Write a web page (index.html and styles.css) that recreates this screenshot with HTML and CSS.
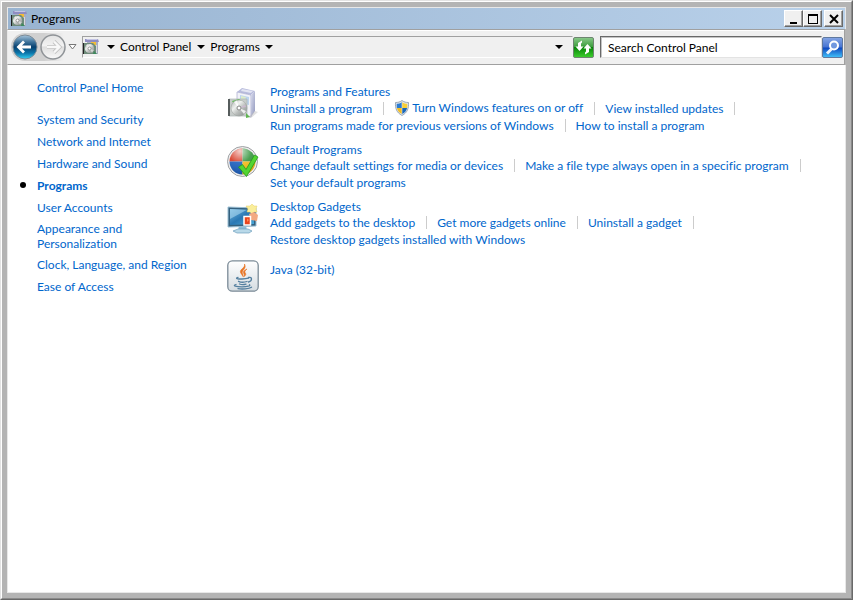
FILE: index.html
```html
<!DOCTYPE html>
<html lang="en">
<head>
<meta charset="UTF-8">
<meta name="viewport" content="width=device-width, initial-scale=1.0">
<title>Programs</title>
<link rel="stylesheet" href="styles.css">
</head>
<body>
  <svg class="defs" width="0" height="0" aria-hidden="true">
    <defs>
      <linearGradient id="box-side" x1="0" y1="0" x2="1" y2="1">
        <stop offset="0" stop-color="#d9dcee"/><stop offset="1" stop-color="#9298bd"/>
      </linearGradient>
      <linearGradient id="disc" x1="0" y1="0" x2="1" y2="1">
        <stop offset="0" stop-color="#a9adab"/><stop offset=".35" stop-color="#eef0ee"/>
        <stop offset=".6" stop-color="#b9bdbb"/><stop offset="1" stop-color="#858a88"/>
      </linearGradient>
      <symbol id="programs-small" viewBox="0 0 16 16">
        <path d="M2 0h13l1 3H2z" fill="#8f8dc0"/>
        <path d="M4 0h10l1 1H3z" fill="#c4c4e4"/>
        <path d="M4 3h11v12H4z" fill="#a9abc0"/>
        <path d="M8 3h5v5H8z" fill="#f4bd35"/>
        <path d="M12 6h2v8h-2z" fill="#d5d8de"/>
        <path d="M1 4h9l3 3v8H1z" fill="#6f8b7a"/>
        <path d="M0 4h1v11H0z" fill="#222"/>
        <circle cx="6.500" cy="9.500" r="4.600" fill="url(#disc)"/>
        <path d="M6 9L3 6l2-1zM7 10l4 1-2 3z" fill="#fff" opacity=".5"/>
        <circle cx="6.500" cy="9.500" r="1.500" fill="#fff" stroke="#777" stroke-width=".7"/>
        <path d="M11 12l3 3h-4z" fill="#3d8a5c"/>
      </symbol>
    </defs>
  </svg>

  <div class="window">
    <header class="title-bar">
      <svg class="icon16" aria-hidden="true"><use href="#programs-small"/></svg>
      <h1>Programs</h1>
      <div class="window-buttons">
        <button type="button" aria-label="Minimize">
          <svg width="14" height="12" viewBox="0 0 14 12"><path d="M3 9h7v2H3z"/></svg>
        </button>
        <button type="button" aria-label="Maximize">
          <svg width="14" height="12" viewBox="0 0 14 12"><path d="M2 1h10v10H2zM3 3v7h8V3z" fill-rule="evenodd"/></svg>
        </button>
        <button type="button" class="close" aria-label="Close">
          <svg width="14" height="12" viewBox="0 0 14 12"><path d="M3 2l8 8M11 2l-8 8" stroke="#000" stroke-width="2"/></svg>
        </button>
      </div>
    </header>

    <div class="toolbar">
      <div class="history">
        <button type="button" class="round" aria-label="Back">
          <svg width="28" height="28" viewBox="0 0 28 28">
            <defs>
              <linearGradient id="back" x1="0" y1="0" x2="0" y2="1">
                <stop offset="0" stop-color="#a9c6dc"/><stop offset=".3" stop-color="#3c7199"/>
                <stop offset=".5" stop-color="#074170"/><stop offset=".75" stop-color="#0b75aa"/>
                <stop offset="1" stop-color="#34d2f5"/>
              </linearGradient>
            </defs>
            <circle cx="14" cy="14" r="12" fill="url(#back)" stroke="#7d8b96" stroke-width="1"/>
            <path d="M8 14h12M13 8.500L7.500 14l5.500 5.500" fill="none" stroke="#fff" stroke-width="2.800"/>
          </svg>
        </button>
        <button type="button" class="round" aria-label="Forward">
          <svg width="28" height="28" viewBox="0 0 28 28">
            <defs>
              <linearGradient id="forward" x1="0" y1="0" x2="0" y2="1">
                <stop offset="0" stop-color="#e3e3e3"/><stop offset=".45" stop-color="#f2f2f2"/>
                <stop offset=".5" stop-color="#dedede"/><stop offset="1" stop-color="#fafafa"/>
              </linearGradient>
            </defs>
            <circle cx="14" cy="14" r="12" fill="url(#forward)" stroke="#8f9397" stroke-width="1.500"/>
            <path d="M8 14h12M15 8.500l5.500 5.500-5.500 5.500" fill="none" stroke="#c2c2c2" stroke-width="4"/>
            <path d="M8 14h12M15 8.500l5.500 5.500-5.500 5.500" fill="none" stroke="#f8f8f8" stroke-width="2.400"/>
          </svg>
        </button>
        <button type="button" class="recent" aria-label="Recent pages">
          <svg width="9" height="6" viewBox="0 0 9 6"><path d="M1 .5h7L4.500 5z" fill="#fff" stroke="#777"/></svg>
        </button>
      </div>

      <nav class="address" aria-label="Address">
        <svg class="icon16" aria-hidden="true"><use href="#programs-small"/></svg>
        <button type="button" class="arrow" aria-label="Locations"></button>
        <a href="#">Control Panel</a>
        <button type="button" class="arrow" aria-label="Control Panel items"></button>
        <a href="#">Programs</a>
        <button type="button" class="arrow" aria-label="Programs items"></button>
        <button type="button" class="arrow previous" aria-label="Previous locations"></button>
      </nav>
      <button type="button" class="tool" aria-label="Refresh">
        <svg width="21" height="21" viewBox="0 0 21 21">
          <defs>
            <linearGradient id="green" x1="0" y1="0" x2="0" y2="1">
              <stop offset="0" stop-color="#8bc98b"/><stop offset=".45" stop-color="#3f9f3f"/>
              <stop offset=".5" stop-color="#078507"/><stop offset="1" stop-color="#3ed02e"/>
            </linearGradient>
          </defs>
          <rect x=".5" y=".5" width="20" height="20" rx="1.500" fill="url(#green)" stroke="#6e8570"/>
          <path d="M9 3.500v2L8 6.500v3h2.500L6.500 14l-4-4.500H5V6zM14.500 7l4 4.500H16V15l-4 2.500v-2l1-1v-3h-2.500z" fill="#fff"/>
        </svg>
      </button>

      <form class="search">
        <input type="search" aria-label="Search Control Panel" placeholder="Search Control Panel">
        <button type="button" class="tool" aria-label="Search">
          <svg width="21" height="21" viewBox="0 0 21 21">
            <defs>
              <linearGradient id="blue" x1="0" y1="0" x2="0" y2="1">
                <stop offset="0" stop-color="#86a6e4"/><stop offset=".48" stop-color="#4573d2"/>
                <stop offset=".52" stop-color="#0e46be"/><stop offset="1" stop-color="#42c3fa"/>
              </linearGradient>
            </defs>
            <rect x=".5" y=".5" width="20" height="20" rx="1.500" fill="url(#blue)" stroke="#60799f"/>
            <path d="M9.500 12L5 16.500" stroke="#eef3fb" stroke-width="3"/>
            <circle cx="12" cy="8.500" r="4" fill="#7198df" stroke="#fff" stroke-width="2"/>
          </svg>
        </button>
      </form>
    </div>

    <div class="content">
      <nav class="sidebar" aria-label="Control Panel">
        <a class="home" href="#">Control Panel Home</a>
        <ul>
          <li><a href="#">System and Security</a></li>
          <li><a href="#">Network and Internet</a></li>
          <li><a href="#">Hardware and Sound</a></li>
          <li class="current"><a href="#" aria-current="page">Programs</a></li>
          <li><a href="#">User Accounts</a></li>
          <li><a href="#">Appearance and<br>Personalization</a></li>
          <li><a href="#">Clock, Language, and Region</a></li>
          <li><a href="#">Ease of Access</a></li>
        </ul>
      </nav>

      <main>
        <section class="category">
          <svg class="icon32" viewBox="0 0 32 32" aria-hidden="true">
            <path d="M10 4l5-4 13 3-4 4z" fill="#b7bbdc"/>
            <path d="M15 1l11 2-2 2-10-2z" fill="#e2e4f2"/>
            <path d="M10 4l14 3v22l-14-3z" fill="#f1f2f8" stroke="#a7abcd" stroke-width=".7"/>
            <path d="M24 7l4-4v20l-4 6z" fill="url(#box-side)"/>
            <path d="M28 23l3 1-7 6-3-1z" fill="#bbb" opacity=".45"/>
            <path d="M13 7l9 2v8l-9-2z" fill="#bbd3ed"/>
            <path d="M14 8l5 1-2 5-3-1z" fill="#dcebc8"/>
            <path d="M2 11h18v17H2z" fill="#c7ccca" stroke="#adb4b4" stroke-width=".7"/>
            <path d="M1 11h2v17H1z" fill="#565c5c"/>
            <path d="M5 13l7-2 5 4-8 5z" fill="#67bd5b"/>
            <circle cx="12" cy="20" r="8" fill="url(#disc)" stroke="#999e9b" stroke-width=".5"/>
            <path d="M12 20l-5-6 3-1.500zM12 20l5 6 2-3z" fill="#fff" opacity=".8"/>
            <path d="M12 20l6-3 1 2z" fill="#d6b8da" opacity=".7"/>
            <circle cx="12" cy="20" r="2" fill="#fff" stroke="#888"/>
            <path d="M19 25l4 4-4 1z" fill="#61b551"/>
          </svg>
          <div class="tasks">
            <h2><a href="#">Programs and Features</a></h2>
            <ul>
              <li><a href="#">Uninstall a program</a></li>
              <li>
                <a class="shielded" href="#">
                  <svg class="icon16" viewBox="0 0 16 16" aria-hidden="true">
                    <path d="M8 .5C10 2 12 2.500 14.500 2.500c.3 6-1 10-6.500 13C2.500 12.500 1.200 8.500 1.500 2.500 4 2.500 6 2 8 .5z" fill="#dfe5ec" stroke="#8795a5" stroke-width=".8"/>
                    <path d="M7.700 2.200V8H2.900c-.2-1.500-.2-2.700-.2-4.300 2 0 3.500-.5 5-1.500z" fill="#2c7cd1"/>
                    <path d="M8.300 2.200V8h4.800c.2-1.500.2-2.700.2-4.300-2 0-3.500-.5-5-1.500z" fill="#f9cf36"/>
                    <path d="M2.900 8h4.800v6C5 12.500 3.500 10.500 2.900 8z" fill="#f3bd21"/>
                    <path d="M13.100 8H8.300v6c2.700-1.500 4.200-3.500 4.800-6z" fill="#1967b9"/>
                  </svg>
                  Turn Windows features on or off
                </a>
              </li>
              <li><a href="#">View installed updates</a></li>
              <li><a href="#">Run programs made for previous versions of Windows</a></li>
              <li><a href="#">How to install a program</a></li>
            </ul>
          </div>
        </section>

        <section class="category">
          <svg class="icon32" viewBox="0 0 32 32" aria-hidden="true">
            <defs>
              <radialGradient id="shine" cx=".4" cy=".1" r=".9">
                <stop offset="0" stop-color="#fff" stop-opacity=".75"/><stop offset=".5" stop-color="#fff" stop-opacity=".1"/>
                <stop offset="1" stop-color="#000" stop-opacity=".15"/>
              </radialGradient>
            </defs>
            <circle cx="15.500" cy="15.500" r="15" fill="#ececec" stroke="#8a8d90" stroke-width=".8"/>
            <path d="M15.500 15.500V2.500a13 13 0 0 0-13 13z" fill="#d63a25"/>
            <path d="M15.500 15.500V2.500a13 13 0 0 1 13 13z" fill="#389640"/>
            <path d="M15.500 15.500h-13a13 13 0 0 0 13 13z" fill="#1d60bf"/>
            <path d="M15.500 15.500h13a13 13 0 0 1-13 13z" fill="#f6bd19"/>
            <circle cx="15.500" cy="15.500" r="13" fill="url(#shine)"/>
            <path d="M11.500 21l4-2.500 3.500 5L27.500 9l3.500 2-11.500 19.500z" fill="#52d532" stroke="#249a1c" stroke-width=".8"/>
          </svg>
          <div class="tasks">
            <h2><a href="#">Default Programs</a></h2>
            <ul>
              <li><a href="#">Change default settings for media or devices</a></li>
              <li><a href="#">Make a file type always open in a specific program</a></li>
              <li><a href="#">Set your default programs</a></li>
            </ul>
          </div>
        </section>

        <section class="category">
          <svg class="icon32" viewBox="0 0 32 32" aria-hidden="true">
            <defs>
              <linearGradient id="screen" x1="0" y1="0" x2="1" y2="1">
                <stop offset="0" stop-color="#6fb3dc"/><stop offset=".5" stop-color="#2a78b4"/><stop offset="1" stop-color="#49a9da"/>
              </linearGradient>
            </defs>
            <path d="M12 22h7l1 6h-9z" fill="#8bbbd6"/>
            <path d="M6 28l5-2h10l4 2-3 2H10z" fill="#b9d9e9" stroke="#6e9fbd" stroke-width=".7"/>
            <path d="M1 4l28 1v18L1 24z" fill="#34617f" stroke="#9bbfd4" stroke-width="1"/>
            <path d="M3 6l24 1v14L3 22z" fill="url(#screen)"/>
            <path d="M3 6l17 .7L3 16z" fill="#b5def4" opacity=".55"/>
            <path d="M25 1l2 2 3 0-1 3 1 3-3 0-2 2-2-2-3 0 1-3-2-3 4 0z" fill="#faee9a" stroke="#e6cf6a" stroke-width=".5"/>
            <path d="M22 11l5-2 4 3-1 6-6-1z" fill="#f3a982"/>
            <path d="M17 13.500h6.500v8.500H17z" fill="#e8451e" stroke="#fff" stroke-width="1.500"/>
            <path d="M20 15.500l2 1.500-2 2z" fill="#ff8a50"/>
          </svg>
          <div class="tasks">
            <h2><a href="#">Desktop Gadgets</a></h2>
            <ul>
              <li><a href="#">Add gadgets to the desktop</a></li>
              <li><a href="#">Get more gadgets online</a></li>
              <li><a href="#">Uninstall a gadget</a></li>
              <li><a href="#">Restore desktop gadgets installed with Windows</a></li>
            </ul>
          </div>
        </section>

        <section class="category single">
          <svg class="icon32" viewBox="0 0 32 32" aria-hidden="true">
            <defs>
              <linearGradient id="tile" x1="0" y1="0" x2="0" y2="1">
                <stop offset="0" stop-color="#fff"/><stop offset="1" stop-color="#d5dce1"/>
              </linearGradient>
            </defs>
            <rect x=".8" y=".8" width="30.400" height="30.400" rx="4.500" fill="url(#tile)" stroke="#7b8b97" stroke-width="1.300"/>
            <path d="M17.500 4c1 4-5 5-4 8.500.4 1.500 2 2.500 2.500 4 .5-2.500-1.500-3-.5-5 .8-2 4-3.500 2-7.500zM20 9c-3.500 1.500-4.500 3-3 5 .6 1 .2 2-.5 2.800 3-1.500 2.500-3 1.500-4.300-.6-1 .5-2.200 2-3.500z" fill="#e87424" stroke="#e87424" stroke-width=".6"/>
            <g fill="none" stroke="#547f9f" stroke-width="1.300" stroke-linecap="round">
              <path d="M11 17.300c-3 1-1 1.700 4 1.700 3 0 5-.3 6.500-.8"/>
              <path d="M11.500 21.300c2 1 6 1 8.500.2"/>
              <path d="M12.500 24c2 .8 4.500.7 6.500.1"/>
              <path d="M21.500 17.500c4-1 4 3.500 0 4.500"/>
              <path d="M9 24.500c-4 1.300 0 2.300 6 2.300 5 0 9-.8 7.500-2.100"/>
              <path d="M11 28.700c4 .6 11 .3 13.500-1.500"/>
            </g>
          </svg>
          <div class="tasks">
            <h2><a href="#">Java (32-bit)</a></h2>
          </div>
        </section>
      </main>
    </div>
  </div>
</body>
</html>
```

FILE: styles.css
```css
* {
  box-sizing: border-box;
}
body {
  margin: 0;
  min-height: 100vh;
  display: flex;
  font-family: Lato, "Open Sans", sans-serif;
  font-size: 12px;
  font-variant-ligatures: none;
  line-height: 16px;
  color: #000;
  background: #b4b4b4;
  border: 1px solid;
  border-color: #e3e3e3 #696969 #696969 #e3e3e3;
}
.defs {
  position: absolute;
}
svg {
  display: block;
  flex: none;
}
h1, h2, ul {
  margin: 0;
  padding: 0;
  font-size: 12px;
  font-weight: normal;
  list-style: none;
}
button {
  padding: 0;
  border: none;
  background: none;
  flex: none;
}
a {
  color: #0066cc;
  text-decoration: none;
}
a:hover {
  text-decoration: underline;
}
.icon16 {
  width: 16px;
  height: 16px;
}
.icon32 {
  width: 32px;
  height: 32px;
}
.window {
  flex: 1;
  display: flex;
  flex-direction: column;
  border: 1px solid;
  border-color: #fff #8a8a8a #8a8a8a #fff;
  padding: 5px;
}

/* title bar */
.title-bar {
  display: flex;
  align-items: center;
  gap: 4px;
  height: 22px;
  padding: 0 2px 0 3px;
  border: 1px solid #e8e8e8;
  border-bottom: none;
  background: linear-gradient(to right, #99b4d1, #b9d1ea);
}
.title-bar h1 {
  flex: 1;
}
.window-buttons {
  display: flex;
}
.window-buttons button {
  width: 19px;
  height: 17px;
  display: flex;
  align-items: center;
  justify-content: center;
  background: #f0f0f0;
  border: 1px solid;
  border-color: #fff #696969 #696969 #fff;
  box-shadow: inset -1px -1px #a0a0a0;
}
.window-buttons .close {
  margin-left: 2px;
}

/* toolbar */
.toolbar {
  display: flex;
  align-items: center;
  height: 36px;
  margin-right: 1px;
  padding: 0 1px 0 3px;
  background: #f0f0f0;
  border: 1px solid #a0a0a0;
  border-left-color: #e8e8e8;
  box-shadow: inset 0 1px #fff;
}
.history {
  display: flex;
  align-items: center;
  margin-right: 5px;
  border-radius: 14px;
  background: linear-gradient(to right, #d0d0d0 50%, #f0f0f0 80%);
}
.round {
  border-radius: 50%;
}
.recent {
  margin-left: 1px;
}
.address {
  flex: 1;
  display: flex;
  align-items: center;
  height: 22px;
  border: 1px solid;
  border-color: #a0a0a0 #f0f0f0 #fff #a0a0a0;
}
.address a {
  color: #000;
}
.arrow {
  width: 19px;
  height: 18px;
  display: flex;
  align-items: center;
  justify-content: center;
}
.arrow::before {
  content: "";
  border: 4px solid transparent;
  border-top-color: #000;
  border-bottom: none;
}
.icon16 + .arrow {
  margin-left: 2px;
}
.address .previous {
  margin-left: auto;
  margin-right: 4px;
}
.search {
  display: flex;
  align-items: center;
  margin-left: 6px;
}
.search input {
  width: 222px;
  height: 22px;
  padding: 0 7px;
  font: inherit;
  color: #000;
  background: #fff;
  border: 1px solid;
  border-color: #696969 #e3e3e3 #e3e3e3 #696969;
  box-shadow: inset 1px 1px #c4c4c4;
  border-radius: 0;
  appearance: none;
}
.search input::placeholder {
  color: #000;
  opacity: 1;
}

/* page */
.content {
  flex: 1;
  display: grid;
  grid-template-columns: 189px 1fr;
  column-gap: 30px;
  background: #fff;
  border: 1px solid #e8e8e8;
  border-top: none;
}
.sidebar {
  padding: 15px 0 0 29px;
}
.home {
  display: block;
  margin-bottom: 15px;
}
.sidebar ul {
  display: flex;
  flex-direction: column;
  gap: 5px;
}
.sidebar li {
  display: flex;
  align-items: center;
  min-height: 17px;
  line-height: 15px;
  white-space: nowrap;
}
.current {
  position: relative;
  font-weight: bold;
}
.current::before {
  content: "";
  position: absolute;
  left: -17px;
  top: 5px;
  width: 6px;
  height: 6px;
  border-radius: 50%;
  background: #000;
}
main {
  padding-top: 19px;
  display: flex;
  flex-direction: column;
  gap: 8px;
}
.category {
  display: flex;
  gap: 11px;
}
.category > .icon32 {
  margin-top: 4px;
}
.single .tasks {
  padding-top: 6px;
}
.tasks h2 {
  line-height: 15px;
}
.tasks ul {
  display: flex;
  flex-wrap: wrap;
}
.tasks li {
  display: flex;
  align-items: center;
  line-height: 17px;
}
.tasks li:not(:last-child)::after {
  content: "";
  width: 1px;
  height: 13px;
  margin: 0 10px 0 11px;
  background: #ccc;
}
.tasks .shielded {
  display: flex;
  align-items: center;
  gap: 2px;
  line-height: 18px;
}
```
